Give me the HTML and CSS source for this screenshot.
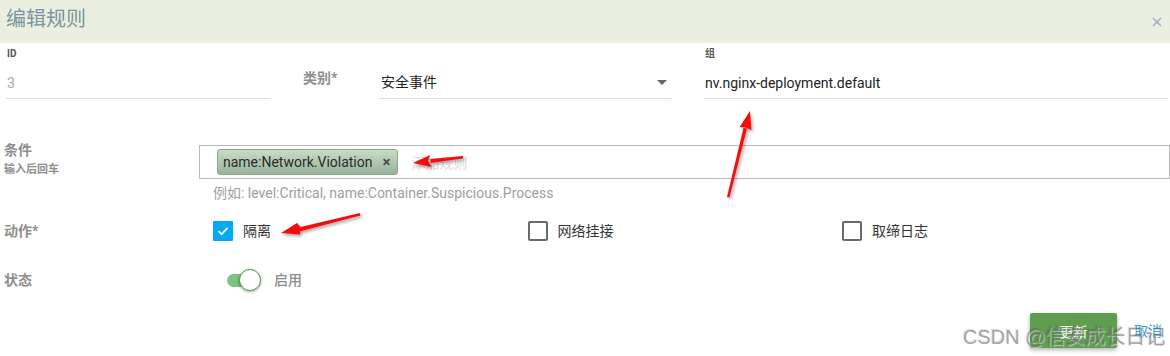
FILE: index.html
```html
<!DOCTYPE html>
<html lang="zh">
<head>
<meta charset="utf-8">
<title>编辑规则</title>
<link rel="stylesheet" href="styles.css">
</head>
<body>
<div class="dialog">
  <header class="hd">
    <h1 class="title">编辑规则</h1>
    <span class="close" aria-label="close">
      <svg width="10" height="10" viewBox="0 0 10 10"><path d="M1 1L9 9M9 1L1 9" stroke="#9fb1c9" stroke-width="1.6" fill="none"/></svg>
    </span>
  </header>

  <div class="row1">
    <div class="fld fld-id">
      <div class="small-label">ID</div>
      <div class="inp muted">3</div>
    </div>
    <div class="fld fld-cat">
      <span class="side-label">类别*</span>
      <div class="inp select">安全事件<span class="caret"></span></div>
    </div>
    <div class="fld fld-grp">
      <div class="small-label">组</div>
      <div class="inp blue-line">nv.nginx-deployment.default</div>
    </div>
  </div>

  <div class="row cond">
    <div class="lab">
      <div class="lab-main">条件</div>
      <div class="lab-sub">输入后回车</div>
    </div>
    <div class="cond-body">
      <div class="tagbox">
        <span class="tag">name:Network.Violation<span class="tag-x">×</span></span>
        <span class="placeholder">添加规则</span>
      </div>
      <div class="hint">例如: level:Critical, name:Container.Suspicious.Process</div>
    </div>
  </div>

  <div class="row act">
    <div class="lab"><div class="lab-main">动作*</div></div>
    <div class="checks">
      <label class="chk"><span class="box on"><svg width="14" height="14" viewBox="0 0 14 14"><path d="M2.5 7.2L5.6 10.2L11.6 3.8" stroke="#fff" stroke-width="1.7" fill="none"/></svg></span>隔离</label>
      <label class="chk"><span class="box"></span>网络挂接</label>
      <label class="chk"><span class="box"></span>取缔日志</label>
    </div>
  </div>

  <div class="row stat">
    <div class="lab"><div class="lab-main">状态</div></div>
    <div class="toggle-wrap">
      <span class="toggle"><span class="knob"></span></span>
      <span class="toggle-text">启用</span>
    </div>
  </div>

  <div class="foot">
    <button class="btn">更新</button>
    <a class="cancel">取消</a>
  </div>
</div>

<div class="watermark">CSDN @信安成长日记</div>

<svg class="arrows" width="1170" height="356" viewBox="0 0 1170 356">
  <defs>
    <filter id="sh" x="-20%" y="-20%" width="140%" height="140%">
      <feDropShadow dx="1.5" dy="2" stdDeviation="1.5" flood-color="#000" flood-opacity="0.35"/>
    </filter>
  </defs>
  <g fill="#f30d0d" filter="url(#sh)">
    <polygon points="463,156 463,158.5 430.5,163 430.5,159"/>
    <polygon points="413,163 430.2,154.9 428,160.6 431.6,166.9"/>

    <polygon points="727,197 729.5,197.5 747,128.5 743.5,128"/>
    <polygon points="750,111 751.4,129.9 745.5,127.4 739.7,126.9"/>

    <polygon points="360,213 360.5,215.5 299.5,231.5 298.5,227.5"/>
    <polygon points="281,233 297.1,223.0 301,228.1 299.9,234.6"/>
  </g>
</svg>
</body>
</html>
```
FILE: styles.css
```css
html, body {
  margin: 0;
  padding: 0;
  background: #fff;
}
body {
  width: 1170px;
  height: 356px;
  overflow: hidden;
  position: relative;
  font-family: Roboto, "Noto Sans CJK SC", sans-serif;
  font-size: 14px;
  color: #333;
}
.dialog {
  display: flex;
  flex-direction: column;
}
.hd {
  height: 43px;
  background: #ebefdf;
  display: flex;
  align-items: center;
  justify-content: space-between;
  padding: 0 8px 0 6px;
}
.title {
  margin: 0;
  font-size: 20px;
  font-weight: 400;
  color: #7896a0;
  letter-spacing: 0;
  line-height: 24px;
  margin-top: -6px;
}
.close {
  display: flex;
}

/* row 1 */
.row1 {
  display: flex;
  padding-left: 6px;
}
.fld {
  display: flex;
  flex-direction: column;
}
.fld-id { width: 265px; }
.fld-cat {
  flex-direction: row;
  margin-left: 32px;
  padding-top: 25px;
}
.fld-grp {
  width: 464px;
  margin-left: 33px;
}
.small-label {
  font-size: 10px;
  font-weight: 700;
  color: #555;
  line-height: 12px;
  margin-top: 5px;
  padding-left: 1px;
}
.inp {
  margin-top: 8px;
  height: 30px;
  line-height: 30px;
  border-bottom: 1px solid #dde3ea;
  padding-left: 1px;
  font-size: 14px;
  color: #222;
}
.inp.muted { color: #a8a8a8; }
.inp.blue-line { border-bottom-color: #d3dfec; }
.fld-id .inp { border-bottom-color: #d3dfec; }
.side-label {
  width: 76px;
  font-size: 14px;
  font-weight: 700;
  color: #8e8e8e;
  line-height: 20px;
}
.select {
  margin-top: 0;
  width: 290px;
  padding-left: 2px;
  position: relative;
  border-bottom-color: #dcdcdc;
  line-height: 26px;
  height: 29px;
  padding-top: 1px;
}
.caret {
  position: absolute;
  right: 4px;
  top: 12px;
  width: 0;
  height: 0;
  border-left: 5px solid transparent;
  border-right: 5px solid transparent;
  border-top: 5px solid #666;
}

/* generic rows */
.row {
  display: flex;
  padding-left: 4px;
}
.lab {
  width: 195px;
  flex: none;
}
.lab-main {
  font-size: 14px;
  font-weight: 700;
  color: #8e8e8e;
  line-height: 18px;
}
.lab-sub {
  font-size: 11px;
  font-weight: 700;
  color: #8e8e8e;
  line-height: 16px;
  margin-top: 3px;
}
.cond { margin-top: 42px; }
.cond-body {
  flex: 1;
  margin-top: 4px;
}
.tagbox {
  height: 26px;
  border: 1px solid #b9b9b9;
  padding: 3px 0 3px 17px;
  display: flex;
  align-items: center;
  gap: 13px;
}
.tag {
  height: 24px;
  border: 1px solid #8ea68e;
  border-radius: 3px;
  background: linear-gradient(#c8dcc6, #97b399);
  display: flex;
  align-items: center;
  padding: 0 7px 0 5px;
  font-size: 14px;
  color: #2b2b2b;
  line-height: 24px;
}
.tag-x {
  margin-left: 10px;
  font-size: 15px;
  font-weight: 700;
  color: #4d4d4d;
}
.placeholder {
  color: #dcdcdc;
  font-size: 14px;
}
.hint {
  margin-top: 5px;
  padding-left: 14px;
  line-height: 18px;
  color: #9e9e9e;
  font-size: 14px;
}

.act { margin-top: 19px; }
.act .lab-main { line-height: 20px; }
.checks {
  display: flex;
  padding-left: 14px;
}
.chk {
  width: 314.5px;
  display: flex;
  align-items: center;
  gap: 10px;
  line-height: 20px;
  font-size: 14px;
  color: #333;
}
.box {
  width: 16px;
  height: 16px;
  border: 2px solid #6a6a6a;
  border-radius: 2px;
  display: flex;
  align-items: center;
  justify-content: center;
}
.box.on {
  width: 20px;
  height: 20px;
  border: none;
  background: #03a9f4;
  border-radius: 1px;
}

.stat { margin-top: 28px; }
.stat .lab-main { line-height: 22px; }
.toggle-wrap {
  display: flex;
  align-items: center;
  padding-left: 28px;
  gap: 14px;
}
.toggle {
  position: relative;
  width: 33px;
  height: 22px;
  display: flex;
  align-items: center;
}
.toggle::before {
  content: "";
  width: 30px;
  height: 13px;
  border-radius: 7px;
  background: #7cc47f;
}
.knob {
  position: absolute;
  right: -1px;
  top: 0;
  width: 20px;
  height: 20px;
  border-radius: 50%;
  background: #fff;
  border: 1px solid #4c9a50;
  box-shadow: 0 1px 3px rgba(0, 0, 0, 0.35);
}
.toggle-text {
  color: #8e8e8e;
  font-size: 14px;
  line-height: 22px;
  font-weight: 500;
}

.foot {
  display: flex;
  justify-content: flex-end;
  align-items: center;
  margin-top: 22px;
  padding-right: 8px;
  gap: 17px;
}
.btn {
  width: 87px;
  height: 35px;
  border: none;
  border-radius: 2px;
  background: #5f9e4f;
  color: #fff;
  font-family: Roboto, "Noto Sans CJK SC", sans-serif;
  font-size: 14px;
  box-shadow: 0 2px 4px rgba(0, 0, 0, 0.3);
}
.cancel {
  color: #29a3ea;
  font-size: 14px;
  line-height: 20px;
}

.watermark {
  position: absolute;
  left: 963px;
  top: 323px;
  font-family: "Liberation Sans", "Noto Sans CJK SC", sans-serif;
  font-size: 20px;
  line-height: 28px;
  color: rgba(110, 110, 110, 0.6);
  text-shadow: 1px 1px 1px rgba(255, 255, 255, 0.5), -1px -1px 1px rgba(0, 0, 0, 0.15);
  white-space: nowrap;
  pointer-events: none;
}
.arrows {
  position: absolute;
  left: 0;
  top: 0;
  pointer-events: none;
}
```
